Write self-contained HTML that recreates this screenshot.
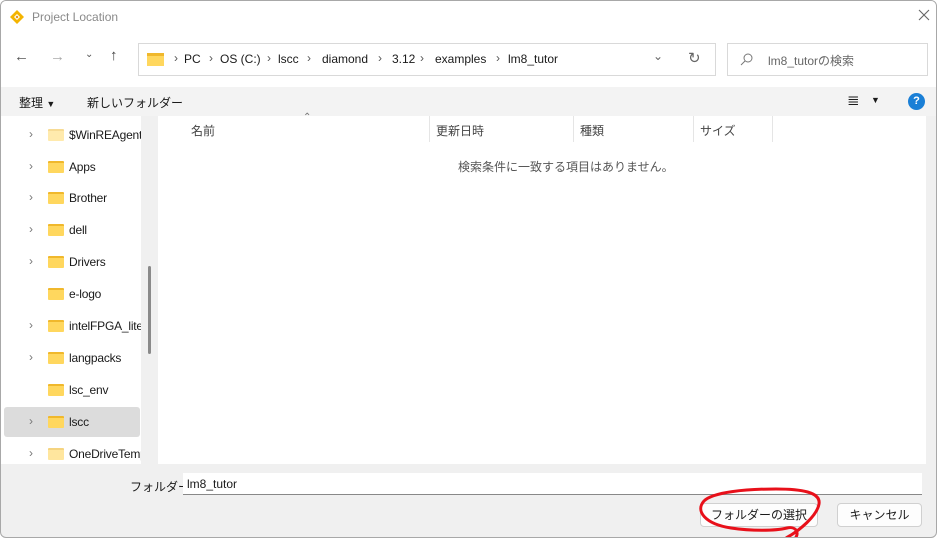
<!DOCTYPE html>
<html><head><meta charset="utf-8"><style>
*{margin:0;padding:0;box-sizing:border-box}
body{width:940px;height:543px;background:#fff;font-family:"Liberation Sans","Noto Sans CJK JP",sans-serif;font-size:12px;color:#1a1a1a;position:relative;overflow:hidden}
.win{position:absolute;left:0;top:0;width:937px;height:538px;background:#f0f0f0;border:1px solid #a8a8a8;border-radius:6px;overflow:hidden}
.abs{position:absolute}
.title{left:0;top:0;width:937px;height:38px;background:#fff}
.addr{left:0;top:38px;width:937px;height:48px;background:#fff}
.box{border:1px solid #d9d9d9;background:#fff}
.tb{left:0;top:86px;width:937px;height:29px;background:#f3f3f3}
.nav{left:0;top:115px;width:140px;height:348px;background:#fff;overflow:hidden}
.sb{left:140px;top:115px;width:17px;height:348px;background:#f0f0f0}
.content{left:157px;top:115px;width:768px;height:348px;background:#fff}
.item{position:absolute;left:0;width:140px;height:30px;font-size:12px;letter-spacing:-0.2px}
.item .ch{position:absolute;left:28px;top:7px;color:#777;font-size:12px}
.item .f{position:absolute;left:47px;top:9px;width:16px;height:12px;background:#ffd75e;border-radius:1px;border-top:2px solid #f0b82c}
.item .t{position:absolute;left:68px;top:8px;white-space:nowrap}
.hdr{position:absolute;top:12px;font-size:12px;color:#444}
.sep{position:absolute;top:0;width:1px;height:26px;background:#e5e5e5}
.btn{position:absolute;top:502px;height:24px;background:#fdfdfd;border:1px solid #d0d0d0;border-radius:4px;font-size:12px;text-align:center;line-height:22px}
.p{position:absolute;top:8px;font-size:12px;white-space:nowrap}
.g{position:absolute;top:7px;font-size:12px;color:#555}
</style></head><body>
<div class="win">
<div class="abs title">
 <svg class="abs" style="left:8px;top:8px" width="16" height="16"><path d="M8 1L15 8L8 15L1 8Z" fill="#f4b400"/><path d="M5 8L8 5L11 8L8 11Z" fill="#fff"/><path d="M6.5 8L8 6.5L9.5 8L8 9.5Z" fill="#e08a00"/></svg>
 <div class="abs" style="left:31px;top:9px;color:#8a8a8a;font-size:12px">Project Location</div>
 <svg class="abs" style="left:917px;top:8px" width="12" height="12"><path d="M1 1L11 11M11 1L1 11" stroke="#666" stroke-width="1.1"/></svg>
</div>
<div class="abs addr">
 <div class="abs" style="left:13px;top:9px;color:#555;font-size:15px">←</div>
 <div class="abs" style="left:49px;top:9px;color:#aaa;font-size:15px">→</div>
 <div class="abs" style="left:84px;top:10px;color:#555;font-size:10px">⌄</div>
 <div class="abs" style="left:109px;top:8px;color:#444;font-size:15px">↑</div>
 <div class="abs box" style="left:137px;top:4px;width:578px;height:33px">
  <div class="abs" style="left:8px;top:9px;width:17px;height:13px;background:#ffd75e;border-top:3px solid #f0b82c"></div>
  <span class="g" style="left:35px">›</span><span class="p" style="left:45px">PC</span>
  <span class="g" style="left:70px">›</span><span class="p" style="left:81px">OS (C:)</span>
  <span class="g" style="left:128px">›</span><span class="p" style="left:139px">lscc</span>
  <span class="g" style="left:168px">›</span><span class="p" style="left:183px">diamond</span>
  <span class="g" style="left:239px">›</span><span class="p" style="left:253px">3.12</span>
  <span class="g" style="left:281px">›</span><span class="p" style="left:296px">examples</span>
  <span class="g" style="left:357px">›</span><span class="p" style="left:369px">lm8_tutor</span>
  <div class="abs" style="left:514px;top:5px;color:#666;font-size:12px">⌄</div>
  <div class="abs" style="left:549px;top:5px;color:#666;font-size:15px">↻</div>
 </div>
 <div class="abs box" style="left:726px;top:4px;width:201px;height:33px">
  <svg class="abs" style="left:12px;top:9px" width="13" height="13"><circle cx="8" cy="5" r="4" fill="none" stroke="#777"/><path d="M5 8L1 12" stroke="#777"/></svg>
  <div class="abs" style="left:40px;top:8px;color:#666;font-size:12px">lm8_tutorの検索</div>
 </div>
</div>
<div class="abs tb">
 <div class="abs" style="left:18px;top:7px">整理 <span style="font-size:9px">▼</span></div>
 <div class="abs" style="left:86px;top:7px">新しいフォルダー</div>
 <div class="abs" style="left:846px;top:4px;font-size:15px">≣</div>
 <div class="abs" style="left:870px;top:8px;font-size:9px">▼</div>
 <div class="abs" style="left:907px;top:6px;width:17px;height:17px;border-radius:50%;background:#1a7fd6;color:#fff;font-size:11px;font-weight:bold;text-align:center;line-height:17px">?</div>
</div>
<div class="abs nav">
 <div class="item" style="top:4px"><span class="ch">›</span><span class="f" style="opacity:.5"></span><span class="t">$WinREAgent</span></div>
 <div class="item" style="top:36px"><span class="ch">›</span><span class="f"></span><span class="t">Apps</span></div>
 <div class="item" style="top:67px"><span class="ch">›</span><span class="f"></span><span class="t">Brother</span></div>
 <div class="item" style="top:99px"><span class="ch">›</span><span class="f"></span><span class="t">dell</span></div>
 <div class="item" style="top:131px"><span class="ch">›</span><span class="f"></span><span class="t">Drivers</span></div>
 <div class="item" style="top:163px"><span class="f"></span><span class="t">e-logo</span></div>
 <div class="item" style="top:195px"><span class="ch">›</span><span class="f"></span><span class="t">intelFPGA_lite</span></div>
 <div class="item" style="top:227px"><span class="ch">›</span><span class="f"></span><span class="t">langpacks</span></div>
 <div class="item" style="top:259px"><span class="f"></span><span class="t">lsc_env</span></div>
 <div class="item" style="top:291px;left:3px;width:136px;background:#dcdcdc;border-radius:3px"><span class="ch" style="left:25px">›</span><span class="f" style="left:44px"></span><span class="t" style="left:65px">lscc</span></div>
 <div class="item" style="top:323px"><span class="ch">›</span><span class="f" style="opacity:.6"></span><span class="t">OneDriveTemp</span></div>
</div>
<div class="abs sb"><div class="abs" style="left:7px;top:150px;width:3px;height:88px;background:#8a8a8a;border-radius:2px"></div></div>
<div class="abs content">
 <div class="abs" style="left:0;top:0;width:768px;height:26px">
  <div class="hdr" style="left:33px;top:6px">名前</div>
  <div class="abs" style="left:145px;top:-4px;color:#777;font-size:10px">⌃</div>
  <div class="sep" style="left:271px"></div>
  <div class="hdr" style="left:278px;top:6px">更新日時</div>
  <div class="sep" style="left:415px"></div>
  <div class="hdr" style="left:422px;top:6px">種類</div>
  <div class="sep" style="left:535px"></div>
  <div class="hdr" style="left:542px;top:6px">サイズ</div>
  <div class="sep" style="left:614px"></div>
 </div>
 <div class="abs" style="left:300px;top:42px;color:#555;font-size:12px">検索条件に一致する項目はありません。</div>
</div>
<div class="abs" style="left:129px;top:477px;font-size:12px">フォルダー:</div>
<div class="abs" style="left:182px;top:472px;width:739px;height:22px;background:#fff;border-bottom:1px solid #888"><div class="abs" style="left:4px;top:4px;font-size:12px">lm8_tutor</div></div>
<div class="btn" style="left:699px;width:118px">フォルダーの選択</div>
<div class="btn" style="left:836px;width:85px">キャンセル</div>
<svg class="abs" style="left:690px;top:485px" width="140" height="58"><path d="M95 52C108 45 126 30 128 18C130 6 110 3 85 3C55 3 22 6 13 15C4 25 14 38 40 42C60 45 84 45 96 42C104 40 110 46 103 54" fill="none" stroke="#e8101a" stroke-width="3"/></svg>
</div>
</body></html>
